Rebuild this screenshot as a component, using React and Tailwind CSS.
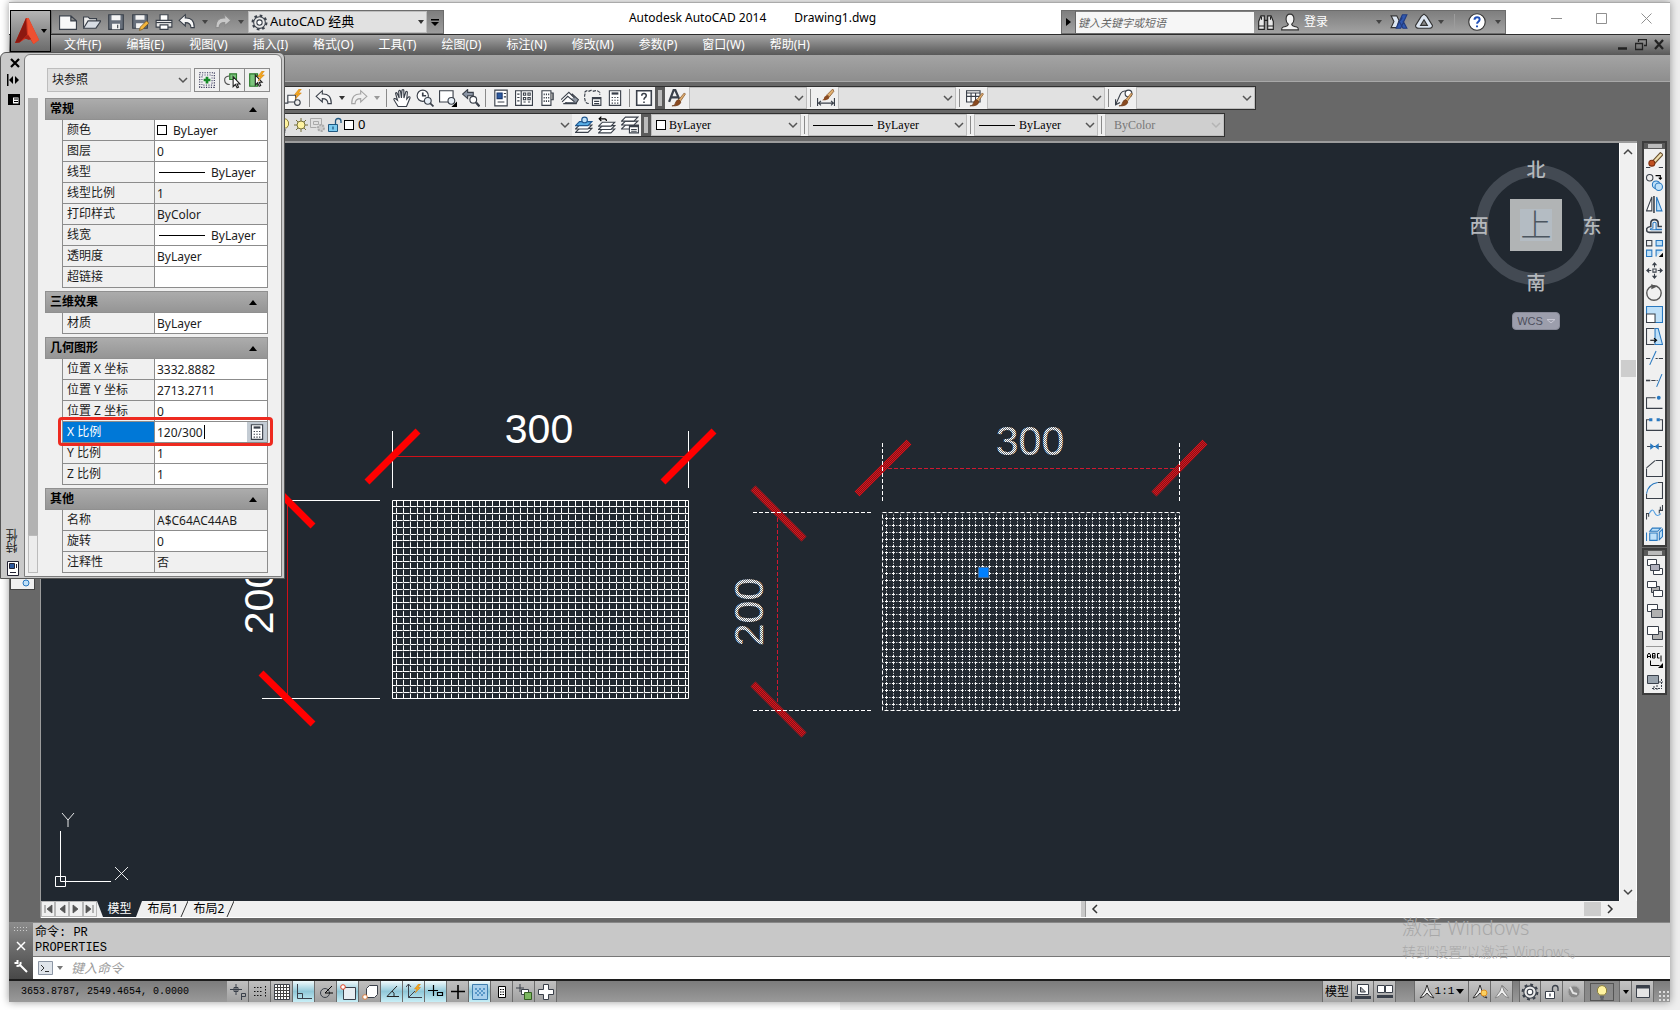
import React from "react";

const UI = "font-['Noto_Sans','Noto_Sans_CJK_SC',sans-serif]";
const MONO = "font-['Liberation_Mono','Noto_Sans_CJK_SC',monospace]";
const SERIF = "font-['Liberation_Serif','Noto_Sans_CJK_SC',serif]";

const K = "#3a404a";
const B = "#2878c0";
const LB = "#bfe0f8";

function Icon({ children, size = "size-4", box = "0 0 16 16" }) {
  return (
    <svg viewBox={box} className={`${size} shrink-0`} fill="none" stroke={K} strokeWidth="1" aria-hidden="true">
      {children}
    </svg>
  );
}

const brush = (
  <>
    <path d="M9.5 9.5 14.5 3.5 15.5 4.5 11 11z" fill="#e0b070" stroke="#8a5a30" strokeWidth=".7" />
    <path d="M3.5 15q3 0 3-2.500q1-3 3-3l2 2q-1 4-8 3.500z" fill="#8a4a20" stroke="#6a3818" strokeWidth=".6" />
  </>
);
const bolt = <path d="M12.500 0 8.500 5h2.500l-2 4 5.500-5.500h-2.500l2.500-3.500z" fill="#f4a81c" stroke="#d07c10" strokeWidth=".5" />;
const layers = (y) => (
  <path d={`M.500 ${y + 3.5}l3.500-3.500h11l-3.500 3.500z`} fill="#fff" />
);

const ICONS = {
  new: <path d="M.500 2.500h10l5 4.500v7.500h-15zM10.500 2.500v4.500h5" fill="#f8f8f8" />,
  open: (
    <>
      <path d="M.500 13V3.500h4l1.500 1.500h6v2" fill="#eee" />
      <path d="M.500 13.500l4-6.500h11.500l-4.500 6.500z" fill="#d8dde4" />
    </>
  ),
  save: (
    <>
      <path d="M1.500 1.500h13v13h-13z" fill="#68707c" />
      <path d="M4 2h8v4.500h-8zM4.500 9.500h7v5h-7z" fill="#f4f4f4" stroke="none" />
      <path d="M9.500 10.500v3" />
    </>
  ),
  saveas: (
    <>
      <path d="M1.500 1.500h13v12h-13z" fill="#68707c" />
      <path d="M4 2h8v4h-8zM4.500 9h7v4.500h-7z" fill="#f4f4f4" stroke="none" />
      <path d="M7.500 15.500l.8-3 5.500-5.500 2 2-5.500 5.500z" fill="#f4b63c" stroke="#7a5a20" strokeWidth=".7" />
    </>
  ),
  print: (
    <>
      <path d="M4.500 6.500v-5h7v5" fill="#fff" />
      <path d="M1 6.500h14v6h-14z" fill="#e8e8e8" />
      <path d="M4.500 10.500h7v4h-7z" fill="#fff" />
      <path d="M1 8.500h14" />
    </>
  ),
  undo: <path d="M1 6.500 6.500 1.500v3q8-.5 8 8.500h-3q0-4.500-5-4.500v3z" fill="#f6f6f6" />,
  redo: <path d="M15 6.500 9.500 1.500v3q-8-.5-8 8.500h3q0-4.500 5-4.500v3z" fill="#c8c8c8" stroke="#8c8c8c" />,
  redoLight: <path d="M15 6.500 9.500 1.500v3q-8-.5-8 8.500h3q0-4.500 5-4.500v3z" fill="#f0f0f0" stroke="#a4a4a4" />,
  gear: (
    <>
      <circle cx="8" cy="8" r="6.500" strokeWidth="2" strokeDasharray="2.500 2.600" />
      <circle cx="8" cy="8" r="5.500" fill="#e8e8e8" />
      <circle cx="8" cy="8" r="2.500" fill="#fff" />
    </>
  ),
  match: (
    <>
      <path d="M2.500 5.500h7v6h-7zM0 12.500h3M9 11l3 3" fill="#fff" />
      <circle cx="11" cy="12" r="2.500" fill="#eee" />
      {bolt}
    </>
  ),
  pan: <path d="M4.500 15.500.8 9.500q0-1.500 1.500-.8L4 10 2.300 4q.5-1.500 1.500 0l1.700 4L5 2q1-1.500 1.700 0L7.500 8l.5-7q1-1 1.600 0L9.700 8l1.700-5.500q1-.8 1.400.3L12.200 9l1.700-2q1.500-.5 1.200 1L12 15.500z" fill="#fff" />,
  zoomrt: (
    <>
      <circle cx="6" cy="6" r="5" fill="#fff" />
      <path d="M6 3v3h3M12.500 12.500l3 3" strokeWidth="1.500" />
      <circle cx="10.500" cy="10.500" r="3" fill="#e6eef6" />
    </>
  ),
  zoomwin: (
    <>
      <path d="M.5 1.500h12v10H.5z" fill="#fff" />
      <circle cx="11" cy="10.500" r="3" fill="#e6eef6" />
      <path d="M16 11v5h-5z" fill="#000" stroke="none" />
    </>
  ),
  zoomprev: (
    <>
      <path d="M.5 4.500 5 .5v2.500h5v3H5v2.500z" fill="#8a94a4" />
      <circle cx="10" cy="9.500" r="3" fill="#fff" />
      <path d="M12.500 12l3 3.500" strokeWidth="2" />
    </>
  ),
  props: (
    <>
      <path d="M2.500 1h11v14h-11z" fill="#fff" />
      <path d="M4.500 3.500h4.500v5h-4.500z" fill="#2c5aa0" stroke="#1c3a70" />
      <path d="M10.500 4h2M10.500 7h2M5 11.500h6" />
    </>
  ),
  center: (
    <>
      <path d="M.5 1.500h15v13h-15zM5.500 2v12" fill="#fff" />
      <path d="M2 4.500h2M2 7.500h2M2 10.500h2M7.500 3.500h2v2h-2zM11.500 3.500h2v2h-2zM7.500 7.500h2v2h-2zM11.500 7.500h2v2h-2zM7.500 11.500h2M11.500 11.500h2" />
    </>
  ),
  palettes: (
    <>
      <path d="M3.500 1.500h8v13h-8z" fill="#fff" />
      <path d="M11.500 3.500h2v6h-2" fill="#999" />
      <path d="M5.500 4v9M7.500 4v9M9.500 4v9" strokeDasharray="1.500 1.500" />
    </>
  ),
  sheets: (
    <>
      <path d="M4 11.500l6-7 5.500 5-2 3H5z" fill="#8e96a2" />
      <path d="M0 9.500l7-6.500 5 5M1 11.500l5-5 6 5M2 13h12" fill="#fff" />
    </>
  ),
  markup: (
    <>
      <path d="M.500 3q2-2.500 4-1 2-1.500 4 0 3-1.500 5.500 1v2M1 4q-1 3 0 6 0 3 4.500 3" strokeDasharray="3 1" />
      <path d="M7.500 7.500h7.500v7h-7.500z" fill="#fff" />
      <path d="M7.500 8.500h7.500M9 11h4.500M9 13h4.500" />
    </>
  ),
  calc: (
    <>
      <path d="M3 1.500h10v13h-10z" fill="#fff" />
      <path d="M5 4h6" strokeWidth="2" />
      <path d="M5 7.500h6M5 10h6M5 12.500h6" strokeDasharray="1.200 1.200" />
    </>
  ),
  help: <path d="M1.500 1.500h13v13h-13zM6 6q0-2 2-2t2 2q0 1-1.500 2-.5.500-.5 1.500M8 11v1.500" fill="#fff" strokeWidth="1.400" />,
  textstyle: (
    <>
      <path d="M1 11.500 5 1h1.500l3.500 8M2.500 7.500h6" strokeWidth="2" />
      {brush}
    </>
  ),
  dimstyle: (
    <>
      <path d="M.5 8v7M15.500 8v7M1 12.500h14M3.500 10.500l-2 2 2 2M12.500 10.500l2 2-2 2" />
      <path d="M9 5 14 0l1 2-4 5z" fill="#e0b070" stroke="#8a5a30" strokeWidth=".7" />
      <path d="M4.500 10q2-1 2-3l2.500-2 2 2q0 3-6.500 3z" fill="#8a4a20" stroke="none" />
    </>
  ),
  tablestyle: (
    <>
      <path d="M.5 1.500h12v10H.5zM.5 3.500h12M.5 6.500h12M4.500 3v8M8.500 3v8" fill="#fff" />
      {brush}
    </>
  ),
  mlstyle: (
    <>
      <path d="M1 13 5 4q2-3 5-2M.5 9v5l4-2" />
      <circle cx="12" cy="4" r="3" fill="#fff" />
      {brush}
    </>
  ),
  bulb: (
    <>
      <path d="M5.500 11q-3-2.500-2-6 1.200-3.500 4.500-3.500T12.500 5q1 3.500-2 6z" fill="#fff3a0" stroke="#8c8040" />
      <path d="M6 13h4M6.500 15h3" />
    </>
  ),
  sun: (
    <>
      <path d="M8 1v14M1 8h14M3 3l10 10M13 3L3 13" stroke="#77713c" />
      <circle cx="8" cy="8" r="4" fill="#fff3a0" stroke="#77713c" />
    </>
  ),
  vpfreeze: (
    <>
      <path d="M.5 1.500h11v7M.5 1.500v9h6M3.500 4.500h5v3h-5z" stroke="#aaa" />
      <circle cx="11" cy="11" r="3" fill="#ccc" stroke="#aaa" strokeWidth="2" strokeDasharray="2 1" />
    </>
  ),
  unlock: (
    <>
      <path d="M1.500 7.500h9v7h-9z" fill="#7ccbf0" stroke="#205880" />
      <path d="M8.500 7V4q0-2.500 2.700-2.500T14 4v2M6 9.500v3" stroke="#205880" strokeWidth="1.300" />
    </>
  ),
  layer1: (
    <>
      {layers(11)}
      {layers(8)}
      <path d="M.500 8.500l3.500-3.500h11l-3.500 3.500z" fill="#58aee6" stroke="#205890" />
      <circle cx="8.500" cy="3.500" r="2.500" fill={LB} stroke="#205890" />
    </>
  ),
  layer2: (
    <>
      {layers(11.5)}
      {layers(8.5)}
      {layers(5.5)}
      <path d="M1 2.500h5q1.500 0 1.500 2M3 .5l-2 2 2 2" stroke="#000" />
    </>
  ),
  layer3: (
    <>
      {layers(8)}
      {layers(4.5)}
      {layers(1)}
      <path d="M7.500 8.500h8v6.500h-8zM7.500 9.500h8M9 12h5M9 13.500h5" fill="#fff" />
    </>
  ),
  quick: (
    <>
      <path d="M1.500 1.500h13v13h-13z" stroke="#335" strokeDasharray="1 1.160" />
      <path d="M3.500 3.500h9v9h-9z" stroke="#557" strokeDasharray="1 1.250" />
      <path d="M8 5v6M5 8h6" stroke="#188a28" strokeWidth="2.400" />
    </>
  ),
  pick: (
    <>
      <path d="M6 2.500h6v5H6z" fill="#7cc47c" stroke="#2a7a2a" />
      <path d="M5.500 4.500Q1 5 1.500 8.500T6 12" stroke="#555" />
      <path d="M9 5v9l2-2 1.500 3 1.300-.6-1.300-2.900h2.500z" fill="#fff" stroke="#222" />
    </>
  ),
  toggle: (
    <>
      <path d="M1.500 2.500h7v11h-7z" fill="#7cc47c" stroke="#2a7a2a" />
      <path d="M6.500 3.500v9l2-2 1.500 3 1.300-.6-1.300-2.900h2.500z" fill="#fff" stroke="#222" />
      {bolt}
    </>
  ),
  binoc: (
    <>
      <path d="M1.500 14.500v-7l2-5h3v12zM9.500 14.500v-12h3l2 5v7zM6.500 6.500h3" fill="#e8e8e8" stroke="#222" />
      <path d="M1.500 11.500h5M9.500 11.500h5M4 3v3M12 3v3" stroke="#222" />
    </>
  ),
  user: <path d="M8 1q3.500 0 3.500 4.500 0 3-2 4.500 0 1.500 4.500 2.500 1.500.5 1.500 2.500H.5q0-2 1.500-2.500 4.500-1 4.500-2.500-2-1.500-2-4.500Q4.500 1 8 1z" fill="#f4f4f4" stroke="#333" />,
  exchange: (
    <>
      <path d="M1 2.500h5l2 4-2 6.500H1l2.500-5.500z" fill="#dde6f2" stroke="#333" />
      <path d="M15 1.500h-4L5.500 13.500h4zM9 7l2-3M8.500 8l3 5.500H15L11.500 7" fill="#3058b0" stroke="#223c80" />
    </>
  ),
  a360: (
    <>
      <path d="M8 1l2.500 2 5 8q0 2.500-3 2.500h-9Q.5 13.500.5 11l5-8z" fill="#dde6f2" stroke="#333" />
      <path d="M8 6l3 5H5z" fill="#888" stroke="#333" />
    </>
  ),
  qmark: (
    <>
      <circle cx="8" cy="8" r="7.300" fill="#fff" stroke="#333" />
      <path d="M5.800 6q0-2.300 2.300-2.300T10.300 6q0 1-1.300 1.800-.9.500-.9 1.700M8 11v1.600" stroke="#2050b8" strokeWidth="1.800" />
    </>
  ),
};

const MODIFY = [
  ["删除", <><path d="M0 14.500h4M12 14.500h4" /><path d="M6 8.500 13.500.5l2.500 2L8.500 10.500z" fill="#f0e0b0" stroke="#6a5030" /><circle cx="5.500" cy="10.500" r="2.800" fill="#c05020" stroke="#803010" /></>],
  ["复制", <><circle cx="3.500" cy="3.500" r="3" /><circle cx="9.500" cy="10" r="3.500" fill={LB} stroke={B} /><circle cx="12" cy="12" r="3.500" fill={LB} stroke={B} /><path d="M9 1.500h4.500V4M12 3.500l1.500 1.500L15 3.500" stroke="#000" /></>],
  ["镜像", <><path d="M5.500 1v13h-5z" fill="#fff" /><path d="M7.500 0v16" strokeWidth="1.500" /><path d="M10 1v13h5z" fill={LB} stroke={B} /></>],
  ["偏移", <><path d="M15 13.500H3q-2.500 0-2.500-2.500t4-3V5q0-3.500 3.500-3.500T11.500 5v3H15" strokeWidth="1.500" /><path d="M15 11H5q-1 0-1-.5t2.500-1V5q0-1 1.500-1t1.500 1v5.500H15" stroke={B} /></>],
  ["阵列", <><path d="M.5.5h5v5h-5z" /><path d="M9.500.5h6v5h-6zM.5 9.500h5v6h-5zM9.500 15.500v-6h6" fill={LB} stroke={B} /><path d="M16 12v4h-4z" fill="#000" stroke="none" /></>],
  ["移动", <><path d="M6.500 6.500h3v3h-3z" /><path d="M8 1v4M8 11v4M1 8h4M11 8h4" /><path d="M8 0l2.500 3h-5zM8 16l2.500-3h-5zM0 8l3-2.500v5zM16 8l-3-2.500v5z" fill={K} stroke="none" /></>],
  ["旋转", <><circle cx="7.500" cy="8.500" r="6.800" stroke="#555" strokeWidth="1.300" /><path d="M5 0v5l5-2.500z" fill="#555" stroke="none" /></>],
  ["缩放", <><path d="M.5.5h15v15H.5z" fill={LB} stroke={B} /><path d="M.5 7.500h8v8h-8z" fill="#fff" /></>],
  ["拉伸", <><path d="M8.500.5h3l4 15h-7z" fill={LB} stroke={B} /><path d="M8 .5H.5v15H8" /><path d="M4 11.500h5M7.500 9.500l2.500 2-2.500 2" stroke="#000" /></>],
  ["修剪", <><path d="M0 8h4M9 8h2M12 8h4" /><path d="M3.500 14l6-13" stroke={B} /></>],
  ["延伸", <><path d="M0 8h4" strokeWidth="1.500" /><path d="M5 8h4M10 8h1" /><path d="M10 14l5-12" stroke={B} /></>],
  ["打断于点", <><path d="M9 3.500H.5v10h15" /><circle cx="12" cy="3.500" r="1.800" fill={B} stroke="none" /></>],
  ["打断", <><path d="M4 3.500H.5v10h15v-10H13" /><path d="M3 2h3v3H3zM10 2h3v3h-3z" fill={B} stroke="none" /></>],
  ["合并", <><path d="M1 8h14" /><path d="M4 5l4 3-4 3zM12 5 8 8l4 3z" fill={B} stroke="none" /></>],
  ["倒角", <><path d="M.5 8v7.500h15V.5H9" /><path d="M.5 7.500l8-7" /></>],
  ["圆角", <><path d="M.5 11v4.500h15V.5H11" /><path d="M.5 11Q2 2 11 .5" stroke={B} /></>],
  ["光顺曲线", <><path d="M.5 14.500V9h2v3M13.500 6V2.500M15.500 1v5h-3v3" /><path d="M3 9q3-6 5-1t6 1" stroke="#58a0e0" /></>],
  ["分解", <><path d="M3.500 6.500h7v7h-7zM3.500 5 6 2h8l-3 3zM12.500 6l3-3v7l-3 3zM.5 6v8" fill={LB} stroke={B} /></>],
];

const ORDER = [
  ["前置", <><path d="M.5.5h9v6h-9zM6.500 9.500h9v6h-9z" fill="#fff" /><path d="M3.500 5.500h9v6h-9z" fill="#b0b0bc" /></>],
  ["后置", <><path d="M4.500 5.500h8v6h-8z" fill="#b0b0b0" /><path d="M.5.5h9v6h-9zM6.500 9.500h9v6h-9z" fill="#fff" /></>],
  ["置于对象之上", <><path d="M.5 1.500h10v7H.5z" fill="#fff" /><path d="M4.500 6.500h11v8h-11z" fill="#b0b0b0" /></>],
  ["置于对象之下", <><path d="M5.500 6.500h10v8h-10z" fill="#b0b0b0" /><path d="M.5 1.500h11v8H.5z" fill="#fff" /></>],
];

function ToolButton({ name, children, w = "w-6" }) {
  return (
    <button type="button" aria-label={name} title={name} className={`flex h-full ${w} shrink-0 items-center justify-center`}>
      {children}
    </button>
  );
}
const T = ({ name, i, w }) => (
  <ToolButton name={name} w={w}>
    <Icon size="size-[18px]">{ICONS[i]}</Icon>
  </ToolButton>
);

const Chevron = ({ d = "M1 3l4 4 4-4", className = "", stroke = "#555" }) => (
  <svg viewBox="0 0 10 10" className={`size-2.5 shrink-0 ${className}`} fill="none" stroke={stroke} strokeWidth="1.500" aria-hidden="true">
    <path d={d} />
  </svg>
);
const Caret = ({ className = "text-[#333]" }) => (
  <svg viewBox="0 0 6 4" className={`h-1 w-1.5 shrink-0 ${className}`} aria-hidden="true">
    <path d="M0 0h6L3 4z" fill="currentColor" />
  </svg>
);

function Combo({ label, value = "", prefix, className = "", text = "", chevron, disabled }) {
  return (
    <label className={`relative flex h-full shrink-0 items-center border border-[#bdbdbd] bg-[#e1e1e1] ${className}`}>
      {prefix}
      <select aria-label={label} disabled={disabled} className={`h-full min-w-0 flex-1 appearance-none bg-transparent px-1 outline-none ${text}`}>
        <option>{value}</option>
      </select>
      <span className="pointer-events-none absolute right-0.5">{chevron || <Chevron />}</span>
    </label>
  );
}

const Swatch = () => <span className="size-2.5 shrink-0 border border-black bg-white" />;
const Grip = () => (
  <span className="flex h-full w-2.5 shrink-0 items-center justify-center bg-[#5a5a5a]">
    <span className="h-4 w-1 bg-[radial-gradient(circle,#bbb_1px,transparent_1px)] bg-[size:2px_2px]" />
  </span>
);
const Sep = () => <span className="mx-[3px] h-[18px] w-px shrink-0 bg-[#8a8a8a]" />;

function TitleBar() {
  const quick = [["新建", "new"], ["打开", "open"], ["保存", "save"], ["另存为", "saveas"], ["打印", "print"]];
  return (
    <div className="flex h-[31px] shrink-0 items-end bg-white">
      <div className="ml-[42px] flex h-6 w-[393px] shrink-0 items-center border border-[#6c6c6c] bg-linear-to-b from-[#7e7e7e] to-[#9c9c9c] pl-1">
        {quick.map(([n, i]) => <T key={n} name={n} i={i} />)}
        <T name="放弃" i="undo" w="w-[22px]" />
        <Caret className="mx-1 text-[#444]" />
        <T name="重做" i="redo" w="w-[22px]" />
        <Caret className="mx-1 text-[#444]" />
        <Combo label="工作空间" value="AutoCAD 经典" className="w-[179px]" text="text-[13px] text-black pl-0.5" prefix={<span className="pl-0.5"><Icon size="size-[17px]">{ICONS.gear}</Icon></span>} chevron={<Caret />} />
        <button type="button" aria-label="自定义快速访问工具栏" className="flex h-full flex-1 items-center justify-center">
          <svg viewBox="0 0 8 7" className="h-[7px] w-2"><path d="M0 0h8v1.500H0zM0 3h8L4 7z" /></svg>
        </button>
      </div>
      <h1 className="flex h-full flex-1 items-center justify-center gap-7 pb-0.5 text-[12px] text-black">
        <span>Autodesk AutoCAD 2014</span>
        <span>Drawing1.dwg</span>
      </h1>
      <div className="flex h-6 w-[445px] shrink-0 items-center border border-[#6c6c6c] bg-linear-to-b from-[#7e7e7e] to-[#a2a2a2]">
        <button type="button" aria-label="展开搜索" className="flex h-full w-3.5 items-center justify-center border-r border-[#666]">
          <svg viewBox="0 0 5 8" className="h-2 w-[5px]"><path d="M0 0l5 4-5 4z" /></svg>
        </button>
        <input aria-label="搜索" placeholder="键入关键字或短语" className="h-[21px] w-[178px] bg-[#f6f6f6] px-0.5 text-[11px] italic placeholder:text-[#666]" />
        <T name="搜索" i="binoc" />
        <T name="用户" i="user" />
        <a href="#login" className="ml-0.5 text-[12px] text-white">登录</a>
        <span className="flex-1" />
        <Caret className="text-[#444]" />
        <T name="Exchange" i="exchange" w="w-[34px]" />
        <T name="Autodesk 360" i="a360" w="w-4" />
        <Caret className="mx-1.5 text-[#444]" />
        <span className="mx-1 h-4 w-px bg-[#9c9c9c]" />
        <T name="帮助" i="qmark" w="w-9" />
        <Caret className="mr-1 text-[#444]" />
      </div>
      <div className="mr-0.5 ml-[28px] flex h-7 w-[134px] shrink-0 items-start justify-center gap-[34px] pt-[7px]">
        {[["最小化", "M0 5.500h11"], ["最大化", "M.5.5h10v10H.5z"], ["关闭", "M.5.5l10 10M10.500.5l-10 10"]].map(([n, d]) => (
          <button key={n} type="button" aria-label={n}>
            <svg viewBox="0 0 11 11" className="size-[11px]" fill="none" stroke="#909090"><path d={d} /></svg>
          </button>
        ))}
      </div>
    </div>
  );
}

function MenuBar() {
  const menus = ["文件(F)", "编辑(E)", "视图(V)", "插入(I)", "格式(O)", "工具(T)", "绘图(D)", "标注(N)", "修改(M)", "参数(P)", "窗口(W)", "帮助(H)"];
  return (
    <nav className="flex h-[21px] shrink-0 items-center border-t border-[#2c2c2c] bg-linear-to-b from-[#a6a6a6] to-[#585858] pl-[55px]">
      <div className="flex gap-[25px] text-[12px] text-white">
        {menus.map((m) => <button key={m} type="button" className="leading-5">{m}</button>)}
      </div>
      <span className="flex-1" />
      <div className="mr-[5px] flex items-center gap-1.5">
        {[["最小化文档", "M1 9.500h9", 2.5], ["还原文档", "M3.500 3V.5h8v6H9M.5 4.500h7v6h-7z", 1.3], ["关闭文档", "M2 1l8 9M10 1l-8 9", 2.2]].map(([n, d, w]) => (
          <button key={n} type="button" aria-label={n}>
            <svg viewBox="0 0 12 12" className="size-3" fill="none" stroke="#222" strokeWidth={w}><path d={d} /></svg>
          </button>
        ))}
      </div>
    </nav>
  );
}

function Toolbars() {
  const line = (cls) => <span className={`ml-1 h-px shrink-0 bg-black ${cls}`} />;
  return (
    <div className="flex h-[59px] shrink-0 flex-col gap-[3px] bg-[#686868] pt-1">
      <div className="ml-[268px] flex h-6 w-[979px] items-center border border-[#303030] bg-[#f0f0f0]">
        <span className="w-1" />
        <T name="特性匹配" i="match" />
        <Sep />
        <T name="放弃" i="undo" w="w-[22px]" />
        <span className="flex w-[13px] justify-center"><Caret /></span>
        <T name="重做" i="redoLight" w="w-[22px]" />
        <span className="flex w-[13px] justify-center"><Caret className="text-[#999]" /></span>
        <Sep />
        <T name="实时平移" i="pan" w="w-[23px]" />
        <T name="实时缩放" i="zoomrt" w="w-[23px]" />
        <T name="窗口缩放" i="zoomwin" w="w-[23px]" />
        <T name="缩放上一个" i="zoomprev" w="w-[23px]" />
        <Sep />
        <T name="特性" i="props" w="w-[23px]" />
        <T name="设计中心" i="center" w="w-[23px]" />
        <T name="工具选项板" i="palettes" w="w-[23px]" />
        <T name="图纸集管理器" i="sheets" w="w-[23px]" />
        <T name="标记集管理器" i="markup" w="w-[23px]" />
        <T name="快速计算器" i="calc" w="w-[22px]" />
        <Sep />
        <T name="帮助" i="help" w="w-[22px]" />
        <Grip />
        <T name="文字样式" i="textstyle" />
        <Combo label="文字样式" className="w-[118px]" />
        <Sep />
        <T name="标注样式" i="dimstyle" />
        <Combo label="标注样式" className="w-[118px]" />
        <Sep />
        <T name="表格样式" i="tablestyle" />
        <Combo label="表格样式" className="w-[118px]" />
        <Sep />
        <T name="多重引线样式" i="mlstyle" />
        <Combo label="多重引线样式" className="min-w-0 flex-1 shrink" />
      </div>
      <div className="ml-[264px] flex h-6 w-[952px] items-center border border-[#303030] bg-[#f0f0f0]">
        <Combo
          label="图层"
          value="0"
          className="w-[298px] border-0"
          text="text-[13px]"
          prefix={
            <span className="flex items-center gap-px pl-0.5">
              <Icon>{ICONS.bulb}</Icon>
              <Icon>{ICONS.sun}</Icon>
              <Icon>{ICONS.vpfreeze}</Icon>
              <Icon>{ICONS.unlock}</Icon>
              <Swatch />
            </span>
          }
        />
        <T name="将对象的图层置为当前" i="layer1" w="w-[23px]" />
        <T name="上一个图层" i="layer2" w="w-[23px]" />
        <T name="图层状态管理器" i="layer3" w="w-[23px]" />
        <Grip />
        <Combo label="颜色控制" value="ByLayer" className={`w-[150px] pl-1 ${SERIF}`} text="text-[12px] !pl-[3px]" prefix={<Swatch />} />
        <Sep />
        <Combo label="线型控制" value="ByLayer" className={`w-[159px] ${SERIF}`} text="text-[12px]" prefix={line("w-[60px]")} />
        <Sep />
        <Combo label="线宽控制" value="ByLayer" className={`w-[124px] ${SERIF}`} text="text-[12px]" prefix={line("w-9")} />
        <Sep />
        <Combo label="打印样式控制" value="ByColor" disabled className={`min-w-0 flex-1 shrink !bg-[#cfcfcf] pl-1 ${SERIF}`} text="text-[12px] text-[#777]" chevron={<Chevron stroke="#b4b4b4" />} />
      </div>
    </div>
  );
}

const vLines = (x0, y0, y1, n) => Array.from({ length: n }, (_, i) => `M${Math.round(x0 + i * 6.88) + 0.5} ${y0}V${y1}`).join("");
const hLines = (y0, x0, x1, n) => Array.from({ length: n }, (_, i) => `M${x0} ${Math.round(y0 + i * 6.88) + 0.5}H${x1}`).join("");

function Drawing() {
  const dim = "font-['Liberation_Sans',sans-serif] text-[41px]";
  return (
    <svg viewBox="41 143 1240 640" className="absolute top-0 left-0 h-[640px] w-[1240px]" fill="none" role="img" aria-label="图形">
      <defs>
        <pattern id="halfWhite" width="2" height="2" patternUnits="userSpaceOnUse">
          <path d="M0 0h1v1H0zM1 1h1v1H1z" fill="#fff" />
          <path d="M1 0h1v1H1zM0 1h1v1H0z" fill="#70747a" />
        </pattern>
        <pattern id="halfRed" width="2" height="2" patternUnits="userSpaceOnUse">
          <path d="M0 0h2v2H0z" fill="#7c161c" />
          <path d="M0 0h1v1H0zM1 1h1v1H1z" fill="#e01018" />
        </pattern>
      </defs>
      <g stroke="#fff">
        <path d="M392.500 500.500h296v198h-296zM392.500 431v57M688.500 431v57M263 500.500h117M262 698.500h118" />
        <path d={vLines(396, 501, 698, 43)} strokeDasharray="5.880 1" />
        <path d={hLines(506, 393, 688, 28)} strokeDasharray="5.880 1" strokeDashoffset="3" />
      </g>
      <path d="M393 456.500h295M287.500 501v197" stroke="#d01018" />
      <path d="M367 482l51-51M663 482l51-51M262 475l51 51M261 673l52 51" stroke="#f00" strokeWidth="7" />
      <text x="539" y="443" textAnchor="middle" fill="#fff" className={dim}>300</text>
      <text transform="translate(273 600) rotate(-90)" textAnchor="middle" fill="#fff" className={dim}>200</text>

      <path d="M777.500 512v198M882 468.500h298" stroke="#d01830" strokeDasharray="4 2" />
      <path d="M857 494l52-52M1154 494l51-52M753 488l51 51M753 684l51 51" stroke="url(#halfRed)" strokeWidth="7" />
      <g stroke="#fff">
        <path d="M882.500 512.500h297v198h-297zM882.500 443v58M1179.500 443v58M753 512.500h119M753 710.500h119" strokeDasharray="4 2" />
        <path d={vLines(886, 513, 710, 43)} strokeDasharray="3 1.440 1 1.440" strokeDashoffset="2.880" />
        <path d={hLines(518, 883, 1179, 28)} strokeDasharray="3 1.440 1 1.440" strokeDashoffset="4.880" />
      </g>
      <text x="1030" y="455" textAnchor="middle" fill="url(#halfWhite)" className={dim}>300</text>
      <text transform="translate(763 612) rotate(-90)" textAnchor="middle" fill="url(#halfWhite)" className={dim}>200</text>
      <path d="M978.500 567.500h10v10h-10z" fill="#0080ff" stroke="#3a6ea8" />
    </svg>
  );
}

function ViewCube() {
  const c = "font-['Noto_Sans_CJK_SC',sans-serif] text-[19px] font-medium";
  return (
    <div className="absolute top-2 right-3 flex w-[142px] flex-col items-center">
      <svg viewBox="0 -8 142 150" className="h-[150px] w-[142px]" aria-label="ViewCube" role="img">
        <circle cx="71" cy="66" r="54" fill="none" stroke="#434a53" strokeWidth="12" />
        <path d="M45 40h52v52H45z" fill="#b1b4b5" />
        <path d="M55 50h32v32H55z" fill="#b4bcc3" />
        <g fill="#b4b8bc" textAnchor="middle" className={c}>
          <text x="71" y="18">北</text>
          <text x="71" y="131">南</text>
          <text x="14" y="74">西</text>
          <text x="127" y="74">东</text>
        </g>
        <text x="71" y="77" textAnchor="middle" fill="#4c5660" className="font-['Noto_Sans_CJK_SC',sans-serif] text-[31px] font-light">上</text>
      </svg>
      <button type="button" className="mt-[11px] flex h-[18px] w-12 items-center justify-center gap-1 rounded border border-[#888a98] bg-[#9c9eac] font-['Liberation_Sans',sans-serif] text-[11px] text-[#4c4e5c]">
        WCS
        <svg viewBox="0 0 8 4" className="h-1 w-2" fill="none" stroke="#c8c8d4"><path d="M0 .5h8L4 4z" /></svg>
      </button>
    </div>
  );
}

function LayoutTabs() {
  const nav = [["第一个", "M2 1v8M9 1v8L4 5z"], ["上一个", "M8 1v8L3 5z"], ["下一个", "M2 1v8l5-4z"], ["最后一个", "M1 1v8l5-4zM8 1v8"]];
  return (
    <div className="flex h-[17px] shrink-0 items-stretch border-b border-white bg-[#f0f0f0]">
      {nav.map(([n, d]) => (
        <button key={n} type="button" aria-label={n} className="flex w-3.5 items-center justify-center border border-[#b8b8b8]">
          <svg viewBox="0 0 10 10" className="size-2.5" fill="#555" stroke="#555" strokeWidth=".8"><path d={d} /></svg>
        </button>
      ))}
      <div role="tablist" className="flex text-[12px] leading-4 text-black">
        <button role="tab" aria-selected="true" type="button" className="w-[45px] bg-[#212830] text-white [clip-path:polygon(0_0,100%_0,calc(100%-6px)_100%,6px_100%)]">模型</button>
        {["布局1", "布局2"].map((t) => (
          <React.Fragment key={t}>
            <button role="tab" aria-selected="false" type="button" className="w-[38px] pl-1">{t}</button>
            <svg viewBox="0 0 8 16" className="h-4 w-2" fill="none" stroke="#333"><path d="M8 0L1 16" /></svg>
          </React.Fragment>
        ))}
      </div>
      <span className="flex-1" />
      <div className="flex w-[556px] items-center pr-[18px]">
        <span className="h-4 w-[5px] border-r border-[#999] bg-[#c8c8c8]" />
        <button type="button" aria-label="向左滚动" className="ml-1"><Chevron d="M7 1L3 5l4 4" stroke="#333" /></button>
        <span className="flex-1" />
        <span className="h-3.5 w-[17px] bg-[#cdcdcd]" />
        <button type="button" aria-label="向右滚动" className="mx-1"><Chevron d="M3 1l4 4-4 4" stroke="#333" /></button>
      </div>
    </div>
  );
}

function Workspace() {
  return (
    <main className="flex min-h-0 flex-1 bg-[#686868]">
      <aside className="w-[31px] shrink-0 pl-px">
        <div className="flex h-[449px] w-[25px] items-end justify-center border border-[#444] bg-[#f0f0f0] pb-0.5 pl-1.5">
          <svg viewBox="0 0 8 8" className="size-2" fill="#bfe0f8" stroke="#2878c0"><circle cx="4" cy="4" r="3" /></svg>
        </div>
      </aside>
      <section className="flex min-w-0 flex-1 flex-col border-t-2 border-l border-[#9c9c9c]">
        <div className="flex min-h-0 flex-1">
          <div className="relative min-w-0 flex-1 overflow-hidden bg-[#212830]">
            <Drawing />
            <ViewCube />
            <svg viewBox="0 0 80 80" className="absolute bottom-2.5 left-3.5 size-20" fill="none" stroke="#fff" role="img" aria-label="UCS">
              <path d="M5.500 20v50.500H56M.5 65.500h10v10h-10z" />
              <path d="M7 2l6 7 6-7M13 9v7M60 56l13 13M73 56L60 69" strokeWidth=".9" />
            </svg>
          </div>
          <div className="flex w-[18px] shrink-0 flex-col items-center border-r border-l border-white bg-[#f0f0f0] py-1">
            <button type="button" aria-label="向上滚动"><Chevron d="M1 7l4-4 4 4" stroke="#444" /></button>
            <span className="basis-[27%]" />
            <span className="h-[17px] w-[15px] bg-[#cdcdcd]" />
            <span className="flex-1" />
            <button type="button" aria-label="向下滚动"><Chevron stroke="#444" /></button>
          </div>
        </div>
        <LayoutTabs />
      </section>
      <aside className="flex w-[33px] shrink-0 flex-col gap-px pl-[5px]">
        <Dock>
          {MODIFY.map(([n, d]) => (
            <button key={n} type="button" aria-label={n} title={n} className="flex h-[22px] items-center justify-center"><Icon size="size-[17px]">{d}</Icon></button>
          ))}
        </Dock>
        <Dock>
          {ORDER.map(([n, d]) => (
            <button key={n} type="button" aria-label={n} title={n} className="flex h-[22px] items-center justify-center"><Icon>{d}</Icon></button>
          ))}
          <span className="mx-0.5 my-0.5 h-px bg-[#999]" />
          <button type="button" aria-label="注释前置" className="flex h-[22px] items-center justify-center">
            <Icon>
              <path d="M.5 6V3l1.500-2 1.500 2v3M.5 4.500h3M5.500 1.500v4.500h2.500V1.500zM5.500 4h2.500M12.500 1.500h-2V6h2M3.500 8.500v5h9M14 3.500v6" stroke="#000" />
              <path d="M16 11v5h-5z" fill="#000" stroke="none" />
            </Icon>
          </button>
          <button type="button" aria-label="图案填充后置" className="flex h-[22px] items-center justify-center">
            <Icon>
              <path d="M.5 1.500h11v8H.5z" fill="#9aa4ae" />
              <path d="M5 14.500h10M14.500 5v10M7 12v4M10 11v5M12 8h4" strokeDasharray="2 1" />
            </Icon>
          </button>
        </Dock>
      </aside>
    </main>
  );
}

function Dock({ children }) {
  return (
    <div className="flex w-[25px] flex-col border-2 border-[#3c3c3c] bg-[#f0f0f0]">
      <span className="flex h-1.5 items-center justify-center bg-[#5a5a5a]">
        <span className="h-1 w-3.5 bg-[radial-gradient(circle,#bbb_1px,transparent_1px)] bg-[size:2px_2px]" />
      </span>
      {children}
    </div>
  );
}

function CommandLine() {
  return (
    <section className="relative mt-1 flex h-[57px] shrink-0">
      <div className="flex w-6 shrink-0 flex-col items-center justify-between bg-linear-to-b from-[#8c8c8c] to-[#484848] pt-1 pb-1.5">
        <span className="h-1.5 w-4 bg-[radial-gradient(circle,#ccc_1px,transparent_1px)] bg-[size:3px_3px]" />
        <button type="button" aria-label="关闭命令行"><Chevron d="M1 1l8 8M9 1l-8 8" stroke="#fff" /></button>
        <button type="button" aria-label="自定义">
          <svg viewBox="0 0 14 14" className="size-3.5" fill="none" stroke="#fff" strokeWidth="2"><path d="M6 6l7 7M3.500 1v3h-3M6.500 3q1 4-4 4" /></svg>
        </button>
      </div>
      <div className="flex min-w-0 flex-1 flex-col">
        <pre className={`flex-1 border-t border-b border-t-[#888] border-b-[#777] bg-[#c8c8c8] px-0.5 pt-[3px] text-[12px] leading-[15px] text-black ${MONO}`}>{"命令: PR\nPROPERTIES"}</pre>
        <div className="flex h-[22px] shrink-0 items-center bg-white pl-[5px]">
          <svg viewBox="0 0 15 14" className="h-3.5 w-[15px]" fill="#dfe4ea" stroke="#8c96a4" aria-hidden="true">
            <path d="M.5.5h14v13H.5z" />
            <path d="M3 4l3 3-3 3M7 10.500h4" fill="none" stroke="#333" />
          </svg>
          <Caret className="ml-1 text-[#777]" />
          <input aria-label="命令" placeholder="键入命令" className="h-full min-w-0 flex-1 bg-transparent pl-2 text-[13px] italic outline-none placeholder:text-[#9c9c9c]" />
        </div>
      </div>
      <div className="pointer-events-none absolute -top-2 left-[1393px] whitespace-nowrap text-[#a8a8a8]">
        <p className="text-[20px] leading-7 font-light">激活 Windows</p>
        <p className="text-[14px] leading-5 font-light">转到“设置”以激活 Windows。</p>
      </div>
    </section>
  );
}

const MODES = [
  ["推断约束", 0, <path d="M6 0v11M0 5.500h12M4 3.500h4v4H4zM11.500 9.500h4v3h-4zM11.500 12v4" />],
  ["捕捉模式", 0, <path d="M2 3.500h9M2 7.500h9M2 11.500h9M13.500 2v12" strokeDasharray="1.500 1.500" stroke="#111" />],
  ["栅格显示", 0, <><path d="M.5.5h15v15H.5z" fill="#fff" /><path d="M3.500 0v16M6.500 0v16M9.500 0v16M12.500 0v16M0 3.500h16M0 6.500h16M0 9.500h16M0 12.500h16" stroke="#444" /></>],
  ["正交模式", 1, <path d="M1.500 0v14.500H16M1.500 9.500h5v5" />],
  ["极轴追踪", 0, <><circle cx="7" cy="9" r="4.500" /><path d="M14 2L7 9h8" stroke="#000" /></>],
  ["对象捕捉", 1, <><path d="M3.500 3.500h12v12h-12z" fill="#e8eef2" /><circle cx="3" cy="3" r="2.300" fill="#fff" stroke="#e04020" /></>],
  ["三维对象捕捉", 0, <><path d="M4.500 4.500l3-3h8v9l-3 3h-8z" fill="#fff" /><circle cx="3" cy="13" r="2.300" fill="#fff" stroke="#e08040" /></>],
  ["对象捕捉追踪", 1, <path d="M13 2L3 12.500h12M8 7q3 2 2 5" stroke="#222" />],
  ["动态 UCS", 1, <><path d="M2.500 0v13.500H16M2.500 13.500L9 7M0 3l2.500-3L5 3" />{bolt}</>],
  ["动态输入", 1, <path d="M5.500 1v11M0 6.500h10M9.500 8.500h5v3h-5z" stroke="#000" strokeWidth="1.200" />],
  ["线宽", 0, <path d="M8 1v14M1 7.500h14" stroke="#000" strokeWidth="1.600" />],
  ["透明度", 1, <><path d="M.5.5h15v15H.5z" fill="#a8d0ec" stroke="#4080b0" /><path d="M3 4h2v2H3zM7 4h2v2H7zM11 4h2v2h-2zM5 6h2v2H5zM9 6h2v2H9zM3 8h2v2H3zM7 8h2v2H7zM11 8h2v2h-2zM5 10h2v2H5zM9 10h2v2H9z" fill="#5898c8" stroke="none" /></>],
  ["快捷特性", 0, <><path d="M4.500 2.500h7v11h-7z" fill="#fff" stroke="#000" /><path d="M6 5.500h4M6 8h4M6 10.500h4" stroke="#000" strokeDasharray="1.500 1" /></>],
  ["选择循环", 0, <><path d="M4 0v8M0 4h8" /><path d="M5.500 5.500h7v5h-7z" fill="#fff" /><path d="M8.500 8.500h7v7h-7z" fill="#7cb860" stroke="#346020" /></>],
  ["注释监视器", 0, <path d="M5.500.5h5v5h5v5h-5v5h-5v-5h-5v-5h5z" fill="#fff" />],
];

function StatusBar() {
  const cell = "flex h-full shrink-0 items-center justify-center border-r border-[#6c6c6c] bg-linear-to-b from-[#c4c4c4] to-[#a4a4a4]";
  const A = (s = "#333") => <path d="M8 1l2 6 5 7-4-1.500L8 9l-3 3.500L1 14l5-7z" fill="#eee" stroke={s} />;
  return (
    <footer className="flex h-[23px] shrink-0 items-center border-t-2 border-[#1c1c1c] bg-linear-to-b from-[#7c7c7c] to-[#9a9a9a]">
      <output className={`w-[218px] shrink-0 pl-3 text-[10px] text-black ${MONO}`}>3653.8787, 2549.4654, 0.0000</output>
      {MODES.map(([n, on, d]) => (
        <button key={n} type="button" aria-label={n} aria-pressed={!!on} className={`flex h-full w-[22px] shrink-0 items-center justify-center border-r border-[#6c6c6c] bg-linear-to-b ${on ? "from-[#f0fafc] via-[#90c8d8] to-[#c8eef6]" : "from-[#c0c0c0] to-[#a0a0a0]"}`}>
          <Icon>{d}</Icon>
        </button>
      ))}
      <span className="flex-1" />
      <button type="button" className={`${cell} w-[30px] border-l text-[12px] text-black`}>模型</button>
      <button type="button" aria-label="快速查看布局" className={`${cell} w-[22px]`}><Icon><path d="M2.500.5h11v10h-11zM5.500 3v5h5z" fill="#fff" /><path d="M0 13.500h16" strokeWidth="3" /></Icon></button>
      <button type="button" aria-label="快速查看图形" className={`${cell} w-[22px]`}><Icon><path d="M.5 1.500h7v7h-7zM8.500 1.500h7v7h-7z" fill="#fff" /><path d="M0 12.500h16" strokeWidth="3" /></Icon></button>
      <span className="w-[18px] shrink-0" />
      <button type="button" aria-label="注释比例" className={`${cell} w-[55px] border-l text-[11px] text-black ${MONO}`}><Icon>{A()}</Icon>1:1<svg viewBox="0 0 8 5" className="ml-0.5 h-[5px] w-2"><path d="M0 0h8L4 5z" /></svg></button>
      <button type="button" aria-label="注释可见性" className={`${cell} w-[22px]`}><Icon>{A()}<circle cx="12" cy="9" r="3" fill="#fbd060" stroke="#e09020" /></Icon></button>
      <button type="button" aria-label="自动添加比例" className={`${cell} w-[22px]`}><Icon>{A("#888")}<path d="M9 2l5 5" stroke="#888" /></Icon></button>
      <span className="w-1.5 shrink-0" />
      <button type="button" aria-label="切换工作空间" className={`${cell} w-[22px] border-l`}><Icon size="size-[18px]">{ICONS.gear}</Icon></button>
      <button type="button" aria-label="锁定" className={`${cell} w-[22px]`}><Icon><path d="M1.500 7.500h9v7h-9z" fill="#fff" /><path d="M8.500 7V4q0-2.500 2.700-2.500T14 4v3M6 9.500v3" strokeWidth="1.300" /></Icon></button>
      <button type="button" aria-label="硬件加速" className={`${cell} w-[22px]`}><Icon><circle cx="8" cy="8" r="6" fill="#888" stroke="#aaa" /><path d="M4 3l3 6 4 1" stroke="#e4e4e4" strokeWidth="2" /></Icon></button>
      <button type="button" aria-label="隔离对象" className={`${cell} w-[35px] !from-[#888] !to-[#8c8c8c]`}>
        <span className="flex h-[18px] w-6 items-center justify-center border border-[#555]"><Icon>{ICONS.bulb}</Icon></span>
      </button>
      <button type="button" aria-label="状态栏菜单" className={`${cell} w-3`}><Caret className="text-black" /></button>
      <button type="button" aria-label="全屏显示" className={`${cell} w-[22px]`}><Icon><path d="M1.500 1.500h13v12h-13z" fill="#e4e4e4" /><path d="M1 3h14" strokeWidth="3" /></Icon></button>
      <span className="ml-1 size-3 shrink-0 self-end bg-[radial-gradient(circle,#ddd_1px,transparent_1px)] bg-[size:4px_4px]" />
    </footer>
  );
}

const line = <span className="mr-1.5 ml-0.5 h-px w-[46px] shrink-0 bg-black" />;
const SECTIONS = [
  ["常规", [
    ["颜色", "ByLayer", { pre: <span className="mr-1.5"><span className="block size-2.5 border border-black bg-white" /></span> }],
    ["图层", "0"],
    ["线型", "ByLayer", { pre: line }],
    ["线型比例", "1", { ro: true }],
    ["打印样式", "ByColor", { ro: true }],
    ["线宽", "ByLayer", { pre: line }],
    ["透明度", "ByLayer"],
    ["超链接", ""],
  ]],
  ["三维效果", [["材质", "ByLayer"]]],
  ["几何图形", [
    ["位置 X 坐标", "3332.8882"],
    ["位置 Y 坐标", "2713.2711"],
    ["位置 Z 坐标", "0"],
    ["X 比例", "120/300", { active: true }],
    ["Y 比例", "1"],
    ["Z 比例", "1"],
  ]],
  ["其他", [
    ["名称", "A$C64AC44AB", { ro: true }],
    ["旋转", "0"],
    ["注释性", "否", { ro: true }],
  ]],
];

function PropertyRow({ id, label, value, opt = {} }) {
  const { pre, ro, active } = opt;
  return (
    <div className="relative flex h-[21px] border-b border-[#8c8c8c]">
      <label htmlFor={id} className={`w-[92px] shrink-0 border-r border-[#8c8c8c] pl-1 leading-5 ${active ? "bg-[#0078d7] text-white" : ""}`}>{label}</label>
      <div className={`flex min-w-0 flex-1 items-center pl-0.5 ${ro ? "bg-[#f0f0f0]" : "bg-white"}`}>
        {pre}
        {active ? (
          <>
            <span className="relative flex min-w-0 flex-1 items-center">
              <input id={id} defaultValue={value} className="h-5 w-full bg-transparent outline-none" />
              <span className="pointer-events-none absolute left-[47px] h-3.5 w-px bg-black" />
            </span>
            <button type="button" aria-label="快速计算器" className="flex h-full w-5 items-center justify-center bg-[#c4ccd4]"><Icon size="size-[18px]">{ICONS.calc}</Icon></button>
          </>
        ) : (
          <input id={id} defaultValue={value} readOnly={ro} className="h-5 w-full min-w-0 bg-transparent outline-none" />
        )}
      </div>
      {active && <span className="pointer-events-none absolute -top-[5px] -right-1.5 -bottom-1 -left-[5px] z-10 rounded-sm border-3 border-[#ee2a20]" />}
    </div>
  );
}

function PropertiesPalette() {
  return (
    <section aria-label="特性" className="absolute top-[52px] left-0 flex w-[285px] rounded-t-md border border-[#555] bg-[#c9c9c9] p-px pr-0.5 text-[12px] text-[#1c1c1c]">
      <div className="flex w-[22px] shrink-0 flex-col items-center pt-1 pb-px">
        <button type="button" aria-label="关闭" className="ml-1">
          <svg viewBox="0 0 10 10" className="size-2.5" fill="none" stroke="#000" strokeWidth="2.200"><path d="M1 1l8 8M9 1L1 9" /></svg>
        </button>
        <button type="button" aria-label="自动隐藏" className="mt-1.5">
          <svg viewBox="0 0 12 12" className="size-3"><path d="M0 0h1.500v12H0zM6 2v8L2 6zM8 2v8l4-4z" /></svg>
        </button>
        <button type="button" aria-label="选项" className="mt-2 ml-0.5">
          <svg viewBox="0 0 12 11" className="h-[11px] w-3"><path d="M0 0h12v11H0z" /><path d="M5 3.500h5.500v6H5z" fill="#fff" /><path d="M6 5h4M6 7.500h4" stroke="#000" /></svg>
        </button>
        <span className="flex-1" />
        <span className="mb-2 rotate-180 text-[12px] leading-5 [writing-mode:vertical-rl]">特性</span>
        <svg viewBox="0 0 12 15" className="h-[15px] w-3" fill="#fff" stroke="#223"><path d="M.5.5h11v14H.5z" /><path d="M2.500 2.500h5v5h-5z" fill="#2c5aa0" /><path d="M3 11.500h6M9.500 3v4" /></svg>
      </div>
      <div className="flex min-w-0 flex-1 flex-col rounded-t-md border border-[#7c7c7c] bg-[#f0f0f0] pr-[13px] pb-[3px]">
        <div className="mt-[13px] ml-[22px] flex h-6">
          <Combo label="选择" value="块参照" className="w-36" text="text-[12px]" />
          <div className="ml-[3px] flex border border-[#8c8c8c]">
            {[["切换 PICKADD", "quick"], ["选择对象", "pick"], ["快速选择", "toggle"]].map(([n, i], k) => (
              <div key={n} className={k ? "border-l border-[#8c8c8c]" : ""}><T name={n} i={i} /></div>
            ))}
          </div>
        </div>
        <div className="mt-1.5 flex">
          <div className="ml-[3px] flex w-2.5 shrink-0 flex-col justify-end bg-[#b2b2b2]">
            <span className="h-[38px] border border-[#bbb] bg-[#ececec]" />
          </div>
          <div className="ml-[7px] flex min-w-0 flex-1 flex-col gap-[3px]">
            {SECTIONS.map(([title, rows], s) => (
              <div key={title}>
                <h2 className="flex h-[22px] items-center justify-between border border-[#909090] bg-linear-to-b from-[#acacac] to-[#959595] pr-2.5 pl-1 font-bold text-black">
                  {title}
                  <svg viewBox="0 0 8 5" className="h-[5px] w-2"><path d="M0 5h8L4 0z" /></svg>
                </h2>
                <div className="ml-[17px] border-r border-l border-[#8c8c8c]">
                  {rows.map(([l, v, o], r) => <PropertyRow key={l} id={`prop-${s}-${r}`} label={l} value={v} opt={o} />)}
                </div>
              </div>
            ))}
          </div>
        </div>
      </div>
    </section>
  );
}

export default function App() {
  return (
    <div className={`relative h-screen overflow-hidden bg-[linear-gradient(to_right,#fff_50%,#eeeeee_50%)] pt-0.5 pr-2.5 pb-2 pl-[9px] leading-normal ${UI}`}>
      <div className="relative flex h-full flex-col border-t border-[#aaa] shadow-[0_0_8px_rgba(0,0,0,0.4)]">
        <TitleBar />
        <MenuBar />
        <button type="button" aria-label="应用程序菜单" className="absolute top-[7px] left-px flex h-[42px] w-[41px] items-center border border-black bg-linear-to-b from-[#b4b4b4] to-[#6c6c6c] pl-1">
          <svg viewBox="0 0 24 26" className="h-[26px] w-6" aria-hidden="true">
            <path d="M11 0h2.500L24 22l-5.500 4-5-7-9 5.500L0 25z" fill="#d23420" />
            <path d="M11 0L0 25l4.500-.5L12 17z" fill="#8c1810" />
            <path d="M12 0h1.500L24 22l-5.500 4L13 16z" fill="#ee5030" />
            <path d="M8.500 20L13 17l3 4-2 1z" fill="#a82014" />
          </svg>
          <Caret className="ml-0.5" />
        </button>
        <div className="h-[27px] shrink-0 border-b border-[#a8a8a8] bg-linear-to-b from-[#a4a4a4] to-[#8e8e8e]" />
        <Toolbars />
        <Workspace />
        <div className="shrink-0 bg-[#686868]"><CommandLine /></div>
        <StatusBar />
      </div>
      <PropertiesPalette />
    </div>
  );
}
